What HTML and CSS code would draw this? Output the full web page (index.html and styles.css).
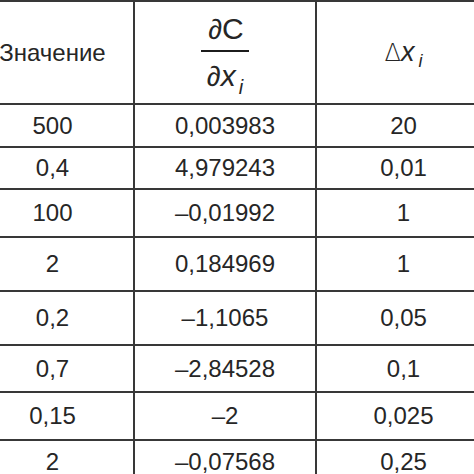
FILE: index.html
```html
<!DOCTYPE html>
<html lang="ru">
<head>
<meta charset="utf-8">
<title>Таблица</title>
<link rel="stylesheet" href="styles.css">
</head>
<body>
<table class="data">
  <colgroup>
    <col class="c1"><col class="c2"><col class="c3">
  </colgroup>
  <thead>
    <tr class="h">
      <th>Значение</th>
      <th>
        <span class="frac">
          <span class="num"><span class="pd">∂</span>C</span>
          <span class="bar"></span>
          <span class="den"><span class="pd">∂</span><i class="var">x</i><i class="sub">i</i></span>
        </span>
      </th>
      <th><span class="delta">Δ</span><i class="var dx">x</i><i class="sub sub-s">i</i></th>
    </tr>
  </thead>
  <tbody>
    <tr class="r1"><td>500</td><td>0,003983</td><td>20</td></tr>
    <tr class="r2"><td>0,4</td><td>4,979243</td><td>0,01</td></tr>
    <tr class="r3"><td>100</td><td>–0,01992</td><td>1</td></tr>
    <tr class="r4"><td>2</td><td>0,184969</td><td>1</td></tr>
    <tr class="r5"><td>0,2</td><td>–1,1065</td><td>0,05</td></tr>
    <tr class="r6"><td>0,7</td><td>–2,84528</td><td>0,1</td></tr>
    <tr class="r7"><td>0,15</td><td>–2</td><td>0,025</td></tr>
    <tr class="r8"><td>2</td><td>–0,07568</td><td>0,25</td></tr>
  </tbody>
</table>
</body>
</html>
```

FILE: styles.css
```css
html, body {
  margin: 0;
  padding: 0;
  background: #ffffff;
  overflow: hidden;
}

.data {
  margin-left: -28px;
  border-collapse: collapse;
  table-layout: fixed;
  width: 518px;
  font-family: "Liberation Sans", Arial, sans-serif;
  font-size: 24px;
  color: #262626;
  border-top: 2px solid #8c8c8c;
}

.c1 { width: 162px; }
.c2 { width: 182px; }
.c3 { width: 174px; }

.data th,
.data td {
  padding: 0;
  text-align: center;
  vertical-align: middle;
  font-weight: normal;
  border: 2px solid #383838;
  line-height: 1;
}

.data tr > :first-child { border-left: none; }
.data tr > :last-child { border-right: none; }

.h { height: 103px; }
.r1 { height: 43px; }
.r2 { height: 42px; }
.r3 { height: 48px; }
.r4 { height: 54px; }
.r5 { height: 54px; }
.r6 { height: 47px; }
.r7 { height: 48px; }
.r8 { height: 44px; }

.frac {
  display: inline-flex;
  flex-direction: column;
  align-items: center;
  vertical-align: middle;
  font-size: 30px;
  margin-top: 2px;
}

.num, .den {
  display: block;
  line-height: 30px;
  white-space: nowrap;
}

.num { margin-left: 2px; }

.bar {
  display: block;
  width: 48px;
  height: 2px;
  background: #1c1c1c;
  margin: 5px 0 9px;
}

.pd {
  font-family: "DejaVu Sans", sans-serif;
  font-weight: 200;
  font-size: 28px;
}

.var {
  font-style: italic;
}

.sub {
  font-style: italic;
  font-size: 20px;
  position: relative;
  top: 8px;
  margin-left: 3px;
}

.delta {
  font-size: 24px;
  font-family: "DejaVu Sans", sans-serif;
  font-weight: 200;
}

.dx { font-size: 27px; }

.sub-s {
  font-size: 18px;
  top: 6px;
  margin-left: 4px;
}
```
